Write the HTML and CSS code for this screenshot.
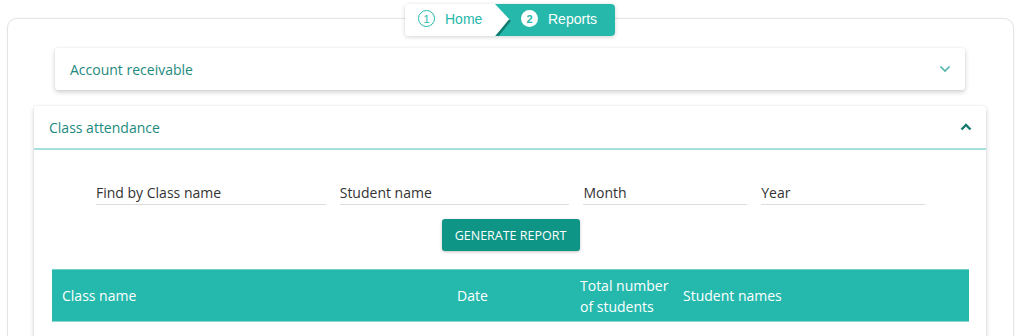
FILE: index.html
```html
<!DOCTYPE html>
<html>
<head>
<meta charset="utf-8">
<link rel="stylesheet" href="styles.css">
</head>
<body>
<div class="page">
  <nav class="crumbs">
    <div class="crumb crumb-home">
      <span class="step step-outline">1</span>
      <span class="crumb-label">Home</span>
      <svg class="crumb-arrow" width="18" height="32" viewBox="0 0 18 32">
        <polygon points="0,0 1,0 16,16 1,32 0,32" fill="#ffffff"/>
        <polyline points="16,16 3,32" fill="none" stroke="#127a6f" stroke-width="2.5"/>
      </svg>
    </div>
    <div class="crumb crumb-reports">
      <span class="step step-filled">2</span>
      <span class="crumb-label">Reports</span>
    </div>
  </nav>
  <div class="card">
    <section class="panel panel-collapsed">
      <header class="panel-head">
        <span class="panel-title">Account receivable</span>
        <svg class="chev" width="12" height="8" viewBox="0 0 12 8"><polyline points="1.5,1.5 6,6 10.5,1.5" fill="none" stroke="#4fb3a9" stroke-width="1.6"/></svg>
      </header>
    </section>
    <section class="panel panel-open">
      <header class="panel-head panel-head-open">
        <span class="panel-title">Class attendance</span>
        <svg class="chev" width="12" height="8" viewBox="0 0 12 8"><polyline points="1.5,6.5 6,2 10.5,6.5" fill="none" stroke="#137a6e" stroke-width="2.4"/></svg>
      </header>
      <div class="panel-body">
        <div class="fields">
          <div class="field field-wide">Find by Class name</div>
          <div class="field field-wide">Student name</div>
          <div class="field field-narrow">Month</div>
          <div class="field field-narrow">Year</div>
        </div>
        <div class="actions">
          <button class="btn">GENERATE REPORT</button>
        </div>
        <table class="report">
          <thead>
            <tr>
              <th class="c-class">Class name</th>
              <th class="c-date">Date</th>
              <th class="c-total">Total number of students</th>
              <th class="c-names">Student names</th>
            </tr>
          </thead>
        </table>
      </div>
    </section>
  </div>
</div>
</body>
</html>
```
FILE: styles.css
```css
html, body {
  margin: 0;
  padding: 0;
  background: #ffffff;
}
body {
  font-family: "Open Sans", "Liberation Sans", sans-serif;
  color: #333333;
  overflow: hidden;
}
.page {
  position: relative;
  padding: 18px 10px 0 7px;
}
.crumbs {
  position: absolute;
  top: 4px;
  left: 405px;
  display: flex;
  height: 32px;
  border-radius: 4px;
  box-shadow: 0 1px 4px rgba(0,0,0,0.18);
  z-index: 2;
  font-family: "Liberation Sans", Arial, sans-serif;
  font-size: 14px;
}
.crumb {
  display: flex;
  align-items: center;
  height: 32px;
  box-sizing: border-box;
  position: relative;
}
.crumb-home {
  background: #ffffff;
  color: #26b8ab;
  width: 89px;
  padding-left: 13px;
  border-radius: 4px 0 0 4px;
}
.crumb-reports {
  background: #26b8ab;
  color: #ffffff;
  width: 121px;
  padding-left: 27px;
  border-radius: 0 4px 4px 0;
}
.crumb-arrow {
  position: absolute;
  left: 89px;
  top: 0;
  z-index: 1;
}
.crumb-label {
  margin-left: 10px;
  margin-top: -3px;
}
.step {
  width: 17px;
  height: 17px;
  border-radius: 50%;
  box-sizing: border-box;
  display: flex;
  align-items: center;
  justify-content: center;
  font-size: 11px;
  margin-top: -3px;
}
.step-outline {
  border: 1.5px solid #26b8ab;
  color: #26b8ab;
}
.step-filled {
  background: #ffffff;
  color: #26b8ab;
  font-weight: bold;
}
.card {
  border: 1px solid #e4e4e4;
  border-radius: 10px;
  height: 340px;
  padding-top: 29px;
  box-shadow: 0 0 3px rgba(0,0,0,0.04);
}
.panel {
  background: #ffffff;
  box-shadow: 0 2px 5px rgba(0,0,0,0.2), 0 0 2px rgba(0,0,0,0.06);
  border-radius: 3px;
}
.panel-collapsed {
  margin: 0 48px 16px 47px;
}
.panel-open {
  margin: 0 27px 0 26px;
  height: 260px;
}
.panel-head {
  display: flex;
  align-items: center;
  justify-content: space-between;
  height: 42px;
  padding: 0 14px 0 15px;
}
.panel-head-open {
  border-bottom: 2px solid #a6e0da;
}
.panel-title {
  color: #1d8a7e;
  font-size: 14px;
}
.panel-body {
  padding: 31px 17px 0 18px;
}
.fields {
  display: flex;
  gap: 14px;
  padding: 0 44px;
}
.field {
  font-size: 14px;
  color: #333333;
  border-bottom: 1px solid #dddddd;
  padding: 2px 0 1px 0;
  line-height: 20px;
}
.field-wide { width: 230px; }
.field-narrow { width: 164px; }
.actions {
  display: flex;
  justify-content: center;
  padding: 14px 0 18px;
}
.btn {
  width: 138px;
  height: 32px;
  background: #0e9585;
  color: #ffffff;
  border: none;
  border-radius: 3px;
  font-family: "Open Sans", sans-serif;
  font-size: 12.5px;
  box-shadow: 0 1px 3px rgba(0,0,0,0.25);
  padding: 0;
}
.report {
  width: 917px;
  border-collapse: collapse;
  table-layout: fixed;
}
.report th {
  background: #25b9ae;
  color: #ffffff;
  font-weight: normal;
  font-size: 14px;
  text-align: left;
  height: 52px;
  padding: 0 0 0 10px;
  line-height: 21px;
  border-top: 1px solid #6fd0c6;
  border-bottom: 1px solid #8fd8d0;
  box-sizing: border-box;
}
.c-class { width: 395px; }
.c-date { width: 123px; }
.c-total { width: 103px; }
```
